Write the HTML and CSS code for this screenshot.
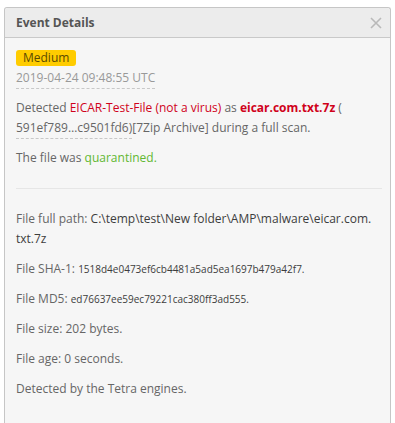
FILE: index.html
```html
<!DOCTYPE html>
<html lang="en">
<head>
  <meta charset="UTF-8">
  <title>Event Details</title>
  <link rel="stylesheet" href="styles.css">
</head>
<body>
  <div class="panel">
    <div class="panel-head">
      <h3>Event Details</h3>
      <svg class="close" width="12" height="12" viewBox="0 0 12 12"><path d="M1 1L11 11M11 1L1 11" stroke="#b9b9b9" stroke-width="1.6" fill="none"/></svg>
    </div>
    <div class="panel-body">
      <span class="badge">Medium</span>
      <div class="stamp"><span class="dotted">2019-04-24 09:48:55 UTC</span></div>

      <p class="lead">Detected <span class="threat">EICAR-Test-File (not a virus)</span> as <b class="threat file">eicar.com.txt.7z</b> (<br><span class="dotted">591ef789…c9501fd6)</span>[7Zip Archive] during a full scan.</p>
      <p>The file was <span class="ok">quarantined.</span></p>

      <hr>

      <p>File full path: <span class="val"><span class="nowrap">C:\temp\test\New folder\AMP\malware\eicar.com.</span><br>txt.7z</span></p>
      <p>File SHA-1: <span class="hash">1518d4e0473ef6cb4481a5ad5ea1697b479a42f7.</span></p>
      <p>File MD5: <span class="hash">ed76637ee59ec79221cac380ff3ad555.</span></p>
      <p>File size: 202 bytes.</p>
      <p>File age: 0 seconds.</p>
      <p>Detected by the Tetra engines.</p>
    </div>
  </div>
</body>
</html>
```

FILE: styles.css
```css
* { margin: 0; padding: 0; box-sizing: border-box; }
body { font-family: 'Open Sans', sans-serif; background: #fff; color: #666; font-size: 12px; padding: 7px 4px 0 4px; overflow: hidden; }
.panel { border: 1px solid #c6c6c6; border-bottom: none; border-radius: 3px 3px 0 0; background: #f6f6f6; height: 430px; }
.panel-head { display: flex; justify-content: space-between; align-items: center; height: 30px; padding: 0 8px 0 11px; background: #ececec; border-bottom: 1px solid #c9c9c9; border-radius: 3px 3px 0 0; }
.panel-head h3 { font-size: 12px; font-weight: 700; color: #555; }
.close { display: block; }
.panel-body { padding: 12px 8px 0 11px; }
.badge { display: inline-block; background: #ffcc00; color: #5a4a00; font-size: 12px; line-height: 16px; padding: 0 7px; border-radius: 3px; vertical-align: top; }
.stamp { color: #999; margin-top: 1px; line-height: 20px; }
.dotted { border-bottom: 1px dashed #c8c8c8; padding-bottom: 2px; }
p { line-height: 20px; margin-bottom: 10px; }
.lead { margin-top: 10px; }
.threat { color: #d0021b; }
.file { font-weight: 700; }
.ok { color: #62b832; }
.val { color: #3d3d3d; }
.nowrap { white-space: nowrap; }
.hash { color: #3d3d3d; font-size: 10px; }
hr { border: none; border-top: 1px solid #e6e6e6; margin: 20px 0 20px; }
```
